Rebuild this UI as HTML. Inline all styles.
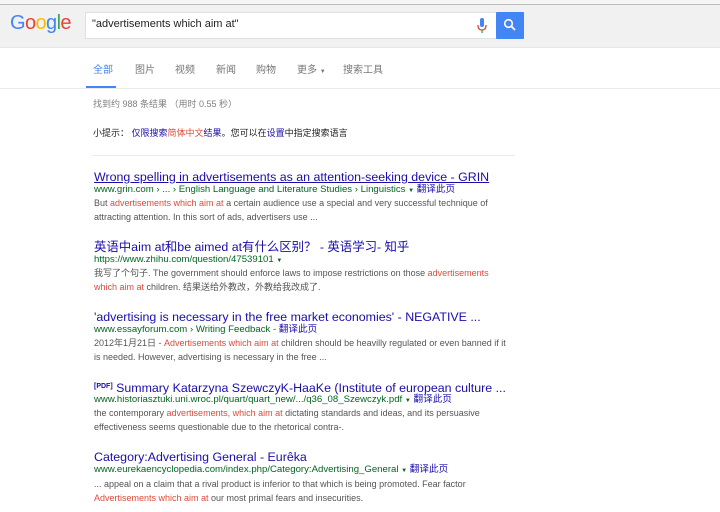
<!DOCTYPE html>
<html><head><meta charset="utf-8"><style>
body{margin:0;width:720px;height:512px;overflow:hidden;background:#fff;font-family:"Liberation Sans","Noto Sans CJK SC",Arial,sans-serif;position:relative}
.a{position:absolute;white-space:nowrap}
.t{font-size:12.4px;color:#1a0dab;line-height:14px}
.u{font-size:9.6px;color:#006621;line-height:11px}
.s{font-size:9px;color:#545454;line-height:11px}
.r{color:#dd4b39}
.tr{color:#1a0dab}
</style></head><body>
<div class="a" style="left:0;top:0;width:720px;height:4px;background:#f5f5f5"></div>
<div class="a" style="left:0;top:4px;width:720px;height:1px;background:#bbb"></div>
<div class="a" style="left:0;top:5px;width:720px;height:42px;background:#f1f1f1;border-bottom:1px solid #e5e5e5"></div>
<div class="a" style="left:10px;top:12px;font-size:20px;letter-spacing:-0.6px"><span style="color:#4285f4">G</span><span style="color:#ea4335">o</span><span style="color:#fbbc05">o</span><span style="color:#4285f4">g</span><span style="color:#34a853">l</span><span style="color:#ea4335">e</span></div>
<div class="a" style="left:85px;top:12px;width:412px;height:27px;background:#fff;border:1px solid #e0e0e0;box-sizing:border-box"></div>
<div class="a" style="left:92px;top:18px;font-size:11px;color:#222">"advertisements which aim at"</div>
<svg class="a" style="left:476px;top:17px" width="12" height="18"><rect x="4" y="1" width="4" height="9" rx="2" fill="#4285f4"/><path d="M2 8 Q2 13 6 13 Q10 13 10 8" stroke="#ea4335" stroke-width="1.3" fill="none"/><rect x="5.4" y="13" width="1.3" height="3" fill="#34a853"/></svg>
<div class="a" style="left:496px;top:12px;width:28px;height:27px;background:#4285f4;border-radius:1px"></div>
<svg class="a" style="left:503px;top:18px" width="14" height="14"><circle cx="5.5" cy="5.5" r="3.8" stroke="#fff" stroke-width="1.6" fill="none"/><path d="M8.3 8.3 L12 12" stroke="#fff" stroke-width="1.8"/></svg>
<div class="a" style="top:61px;left:93px;font-size:10px;color:#4285f4">全部</div>
<div class="a" style="top:61px;left:135px;font-size:10px;color:#777">图片</div>
<div class="a" style="top:61px;left:175px;font-size:10px;color:#777">视频</div>
<div class="a" style="top:61px;left:216px;font-size:10px;color:#777">新闻</div>
<div class="a" style="top:61px;left:256px;font-size:10px;color:#777">购物</div>
<div class="a" style="top:61px;left:297px;font-size:10px;color:#777">更多 <span style="font-size:6px">▼</span></div>
<div class="a" style="top:61px;left:343px;font-size:10px;color:#777">搜索工具</div>
<div class="a" style="left:86px;top:86px;width:30px;height:2px;background:#4285f4"></div>
<div class="a" style="left:0;top:88px;width:720px;height:1px;background:#ebebeb"></div>
<div class="a" style="left:93px;top:97px;font-size:9px;color:#808080">找到约 988 条结果 （用时 0.55 秒）</div>
<div class="a" style="left:93px;top:126px;font-size:9px;color:#222">小提示： <span class="tr">仅限搜索</span><span class="r">简体中文</span><span class="tr">结果</span>。您可以在<span class="tr">设置</span>中指定搜索语言</div>
<div class="a" style="left:92px;top:155px;width:423px;height:1px;background:#ebebeb"></div>

<div class="a t" style="left:94px;top:170px;text-decoration:underline">Wrong spelling in advertisements as an attention-seeking device - GRIN</div>
<div class="a u" style="left:94px;top:184px">www.grin.com › ... › English Language and Literature Studies › Linguistics <span style="font-size:6px">▼</span> <span class="tr">翻译此页</span></div>
<div class="a s" style="left:94px;top:198px">But <span class="r">advertisements which aim at</span> a certain audience use a special and very successful technique of</div>
<div class="a s" style="left:94px;top:212px">attracting attention. In this sort of ads, advertisers use ...</div>

<div class="a t" style="left:94px;top:240px">英语中aim at和be aimed at有什么区别？ - 英语学习- 知乎</div>
<div class="a u" style="left:94px;top:254px">https://www.zhihu.com/question/47539101 <span style="font-size:6px">▼</span></div>
<div class="a s" style="left:94px;top:268px">我写了个句子. The government should enforce laws to impose restrictions on those <span class="r">advertisements</span></div>
<div class="a s" style="left:94px;top:282px"><span class="r">which aim at</span> children. 结果送给外教改，外教给我改成了.</div>

<div class="a t" style="left:94px;top:310px">'advertising is necessary in the free market economies' - NEGATIVE ...</div>
<div class="a u" style="left:94px;top:324px">www.essayforum.com › Writing Feedback - <span class="tr">翻译此页</span></div>
<div class="a s" style="left:94px;top:338px">2012年1月21日 - <span class="r">Advertisements which aim at</span> children should be heavilly regulated or even banned if it</div>
<div class="a s" style="left:94px;top:352px">is needed. However, advertising is necessary in the free ...</div>

<div class="a t" style="left:94px;top:380px"><span style="font-size:7px;font-weight:bold;vertical-align:4px">[PDF]</span> Summary Katarzyna SzewczyK-HaaKe (Institute of european culture ...</div>
<div class="a u" style="left:94px;top:394px">www.historiasztuki.uni.wroc.pl/quart/quart_new/.../q36_08_Szewczyk.pdf <span style="font-size:6px">▼</span> <span class="tr">翻译此页</span></div>
<div class="a s" style="left:94px;top:408px">the contemporary <span class="r">advertisements, which aim at</span> dictating standards and ideas, and its persuasive</div>
<div class="a s" style="left:94px;top:422px">effectiveness seems questionable due to the rhetorical contra-.</div>

<div class="a t" style="left:94px;top:450px">Category:Advertising General - Eurêka</div>
<div class="a u" style="left:94px;top:464px">www.eurekaencyclopedia.com/index.php/Category:Advertising_General <span style="font-size:6px">▼</span> <span class="tr">翻译此页</span></div>
<div class="a s" style="left:94px;top:479px">... appeal on a claim that a rival product is inferior to that which is being promoted. Fear factor</div>
<div class="a s" style="left:94px;top:493px"><span class="r">Advertisements which aim at</span> our most primal fears and insecurities.</div>
</body></html>
